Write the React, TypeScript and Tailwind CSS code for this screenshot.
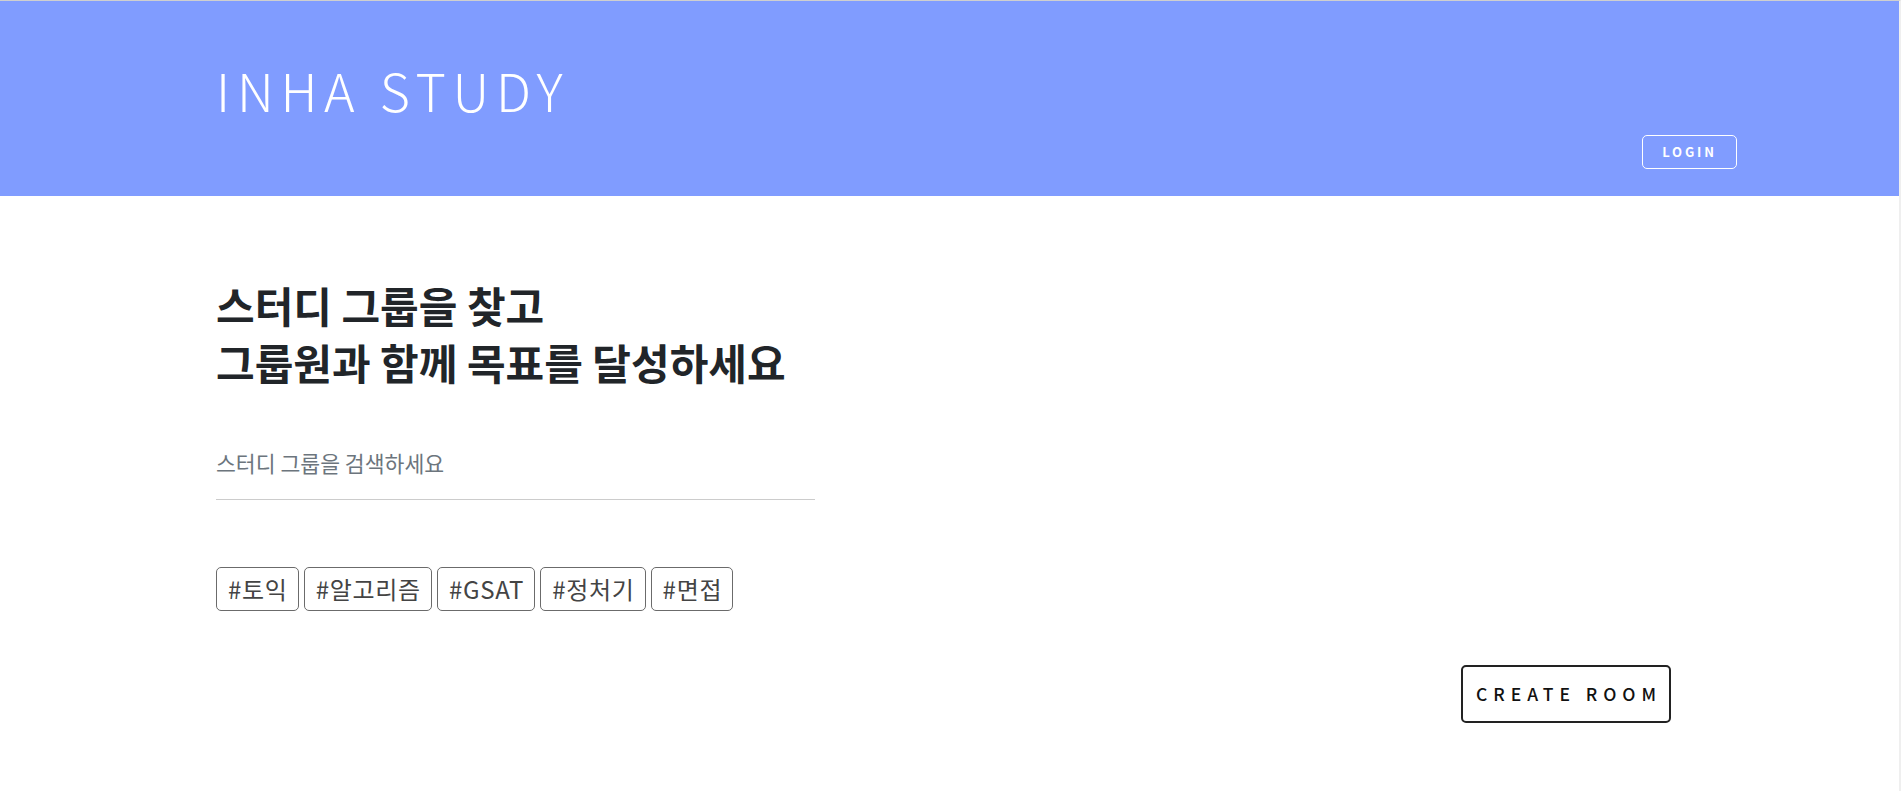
import React, { useState } from 'react';

const font = { fontFamily: '"Noto Sans CJK KR", "Noto Sans", sans-serif' };

interface TagProps {
  label: string;
}

const Tag: React.FC<TagProps> = ({ label }) => (
  <button className="border border-[#6b6b6b] rounded-[5px] pl-[11px] pr-[10px] py-[3px] text-[24px] leading-[36px] tracking-[0.03em] text-[#444] bg-white">
    {label}
  </button>
);

export default function App() {
  const [query, setQuery] = useState('');

  const tags = ['#토익', '#알고리즘', '#GSAT', '#정처기', '#면접'];

  return (
    <div
      className="min-h-screen bg-white border-t border-[#cfcfcf] border-r-2 border-r-[#efefef]"
      style={font}
    >
      {/* Header */}
      <header className="h-[195px] bg-[#809cff] pl-[216px] pr-[162px] pt-[63px] flex flex-col">
        <h1 className="text-[52px] leading-none font-light tracking-[0.13em] text-white">
          INHA STUDY
        </h1>
        <div className="flex justify-end mt-[19px]">
          <button className="w-[95px] h-[34px] border border-white rounded-[5px] text-white text-[13px] font-bold tracking-[0.22em]">
            LOGIN
          </button>
        </div>
      </header>

      {/* Main */}
      <main className="pl-[216px] pr-[228px] pt-[80px]">
        <h2 className="text-[42px] leading-[57px] font-bold text-[#212529]">
          스터디 그룹을 찾고
          <br />
          그룹원과 함께 목표를 달성하세요
        </h2>

        <input
          type="text"
          value={query}
          onChange={(e) => setQuery(e.target.value)}
          placeholder="스터디 그룹을 검색하세요"
          className="mt-[57px] block w-[599px] h-[53px] pb-[22px] text-[21.6px] leading-[30px] border-b border-[#cccccc] outline-none placeholder:text-[#6c757d] text-[#212529] bg-transparent"
        />

        <div className="flex gap-[5px] mt-[67px]">
          {tags.map((tag, index) => (
            <Tag key={index} label={tag} />
          ))}
        </div>

        <div className="flex justify-end mt-[54px]">
          <button className="h-[58px] border-2 border-[#222] rounded-[5px] pl-[13px] pr-[7px] text-[17.5px] font-medium tracking-[0.34em] text-[#111]">
            CREATE ROOM
          </button>
        </div>
      </main>
    </div>
  );
}
